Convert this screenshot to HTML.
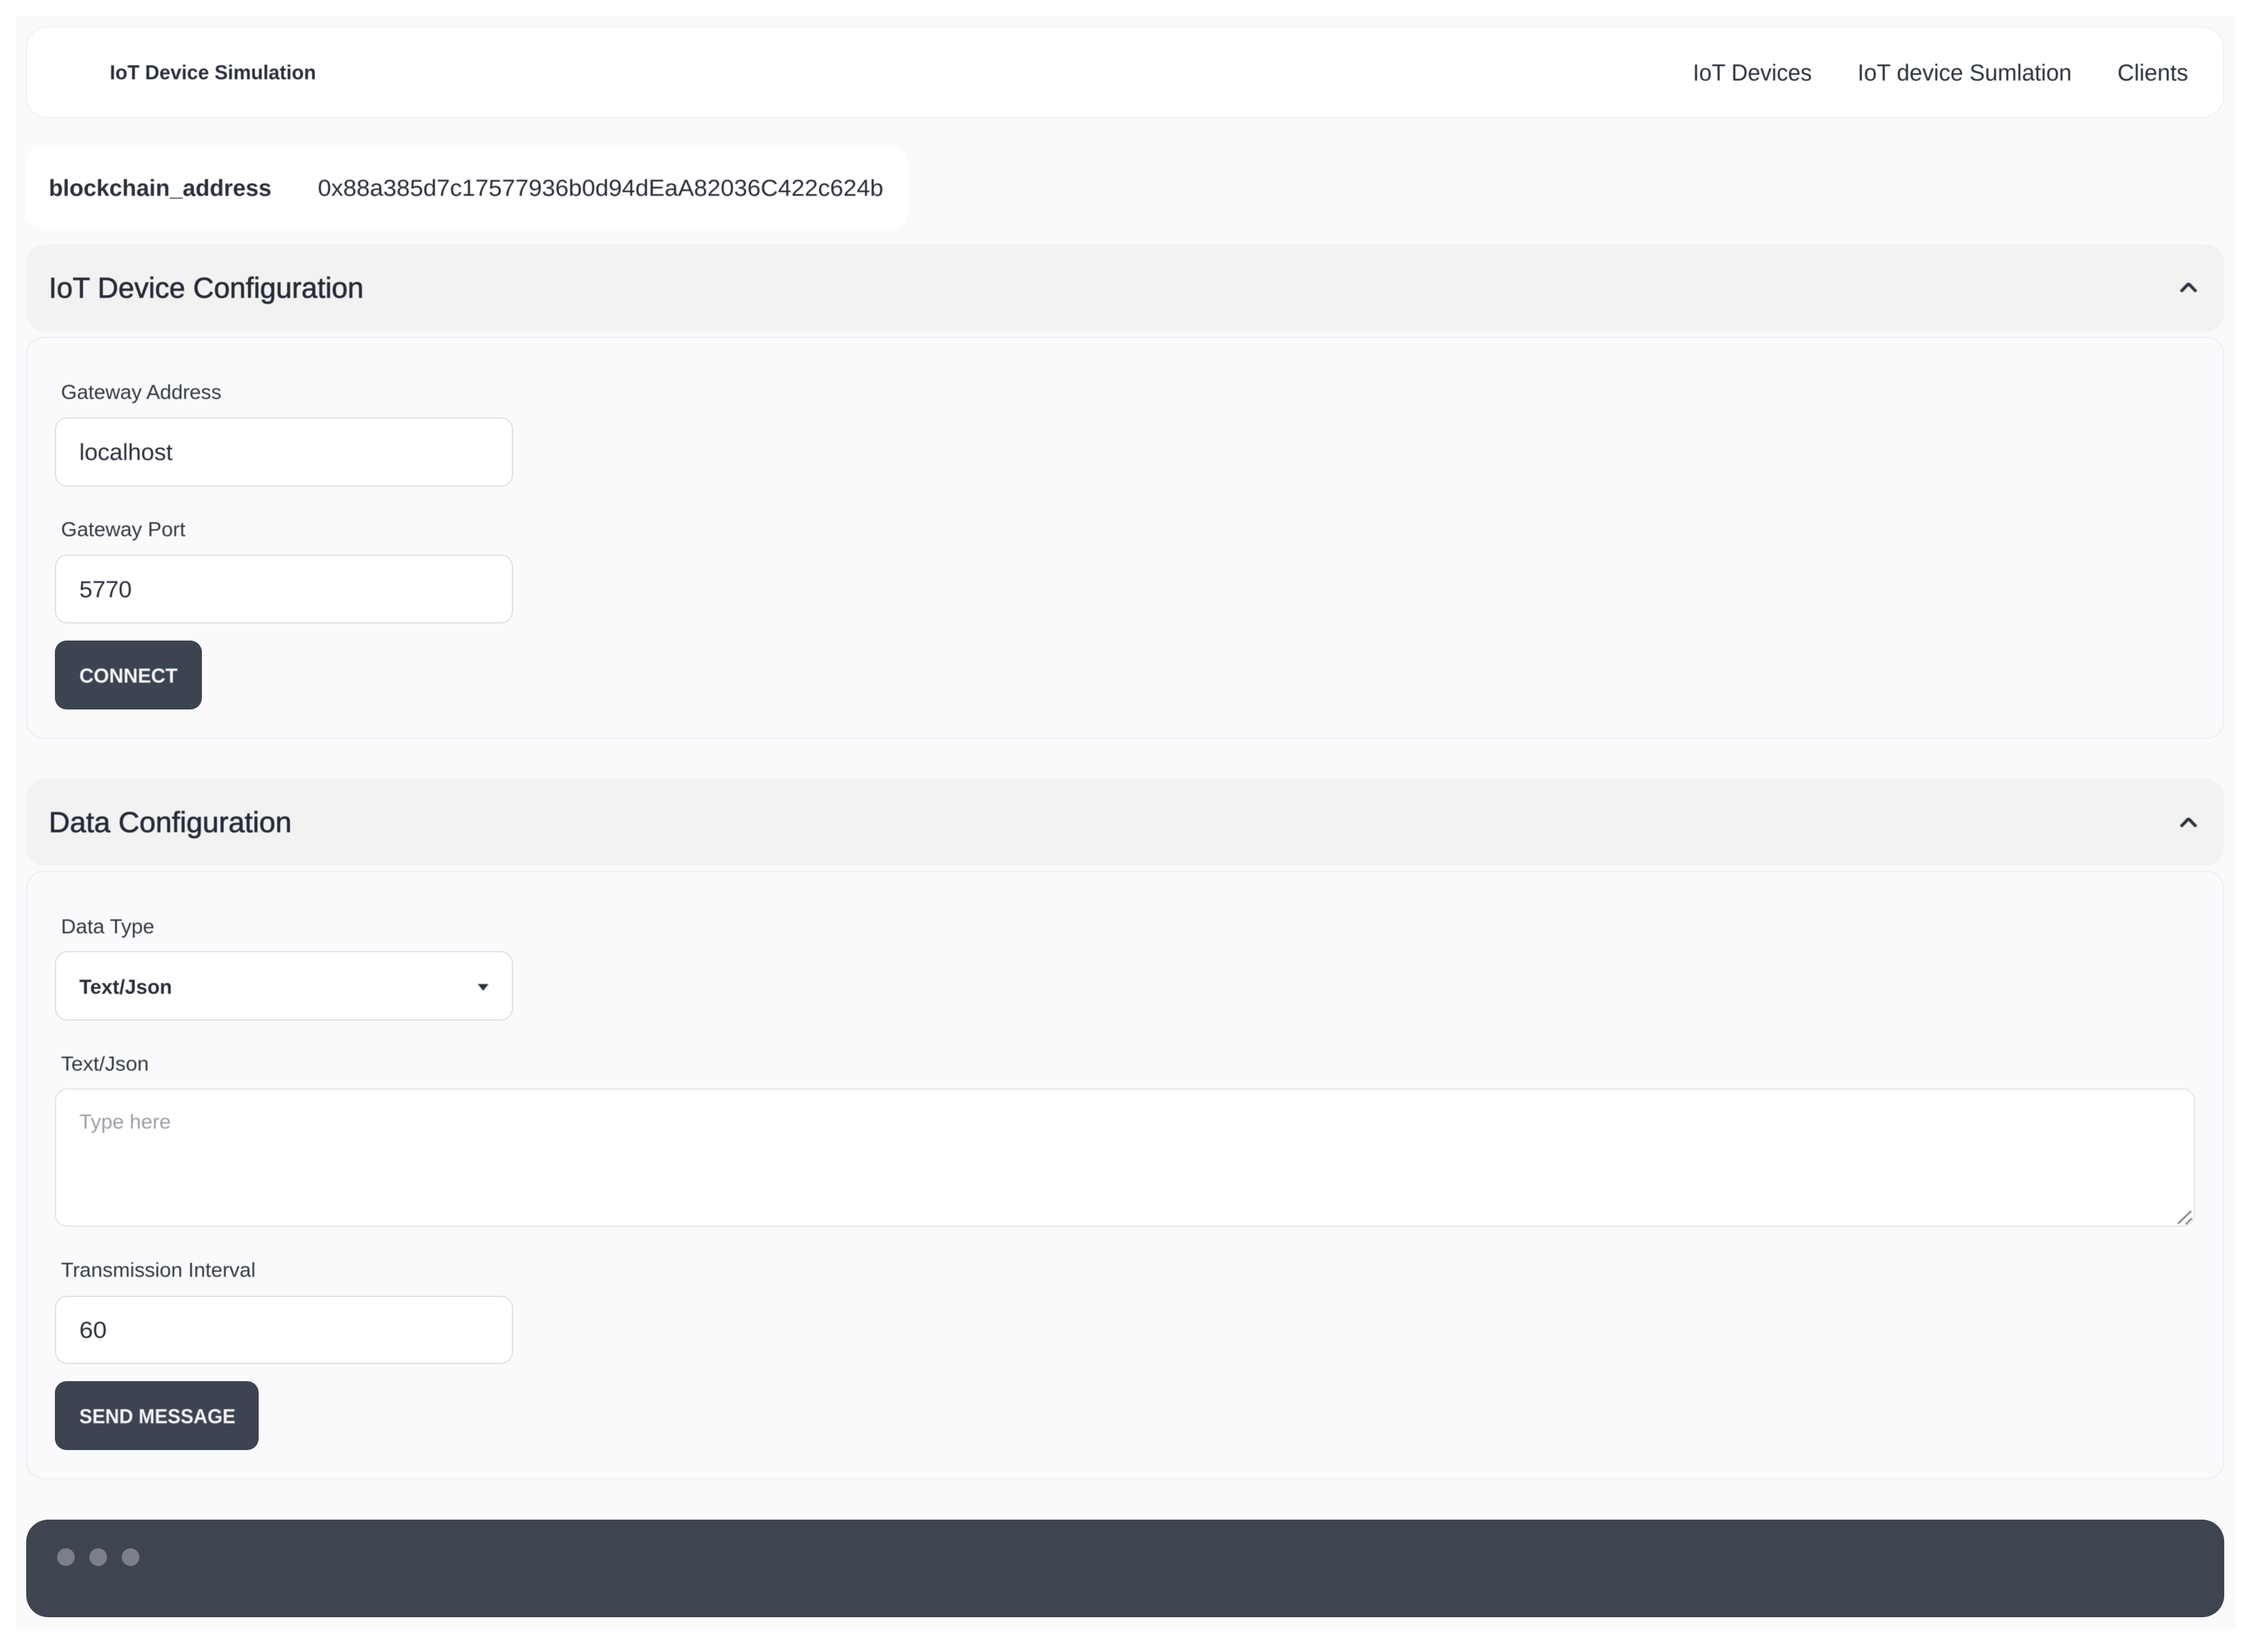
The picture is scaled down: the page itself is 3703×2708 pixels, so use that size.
<!DOCTYPE html>
<html lang="en">
<head>
<meta charset="utf-8">
<title>IoT Device Simulation</title>
<style>
html,body{margin:0;padding:0;background:#fff;width:3703px;height:2708px;overflow:hidden}
svg{display:block}
text{font-family:"Liberation Sans",Arial,sans-serif;fill:#2a303c;filter:blur(.6px)}
.b{font-weight:700}
.l{font-size:33px;fill:#333a46}
.m{font-size:38px}
.h{font-size:47px;fill:#262c38;stroke:#262c38;stroke-width:.8px}
.w{fill:#f4f5f7;font-size:33px;font-weight:700}
</style>
</head>
<body>
<svg xmlns="http://www.w3.org/2000/svg" width="3703" height="2708" viewBox="0 0 3703 2708">
<defs><filter id="s"><feGaussianBlur stdDeviation=".7"/></filter></defs>
<rect width="3703" height="2708" fill="#fff"/>
<rect x="26" y="26" width="3639" height="2644" fill="#fafafc"/>

<!-- navbar -->
<rect x="43" y="44" width="3602" height="149" rx="36" fill="#fff" stroke="#f1f2f5" stroke-width="2"/>
<text class="b" x="180" y="130" font-size="33" textLength="338" lengthAdjust="spacingAndGlyphs">IoT Device Simulation</text>
<text class="m" x="2775" y="132" textLength="195" lengthAdjust="spacingAndGlyphs">IoT Devices</text>
<text class="m" x="3045" y="132" textLength="351" lengthAdjust="spacingAndGlyphs">IoT device Sumlation</text>
<text class="m" x="3471" y="132" textLength="116" lengthAdjust="spacingAndGlyphs">Clients</text>

<!-- address -->
<rect x="43" y="241" width="1445" height="133" rx="24" fill="#fff"/>
<text class="m b" x="80" y="321" textLength="365" lengthAdjust="spacingAndGlyphs">blockchain_address</text>
<text class="m" x="521" y="321" textLength="927" lengthAdjust="spacingAndGlyphs">0x88a385d7c17577936b0d94dEaA82036C422c624b</text>

<!-- collapse 1 -->
<rect x="43" y="401" width="3603" height="142" rx="30" fill="#f2f2f3"/>
<text class="h" x="80" y="488" textLength="516" lengthAdjust="spacingAndGlyphs">IoT Device Configuration</text>
<path d="M3575 478L3587.500 465L3600 478" fill="none" stroke="#2a303c" stroke-width="5" filter="url(#s)"/>
<rect x="44" y="553" width="3601" height="657" rx="28" fill="none" stroke="#eceef2" stroke-width="2"/>

<text class="l" x="100" y="654" textLength="263" lengthAdjust="spacingAndGlyphs">Gateway Address</text>
<rect x="91" y="685" width="749" height="112" rx="19" fill="#fff" stroke="#dfe0e4" stroke-width="2"/>
<text class="m" x="130" y="754" textLength="153" lengthAdjust="spacingAndGlyphs">localhost</text>

<text class="l" x="100" y="879" textLength="204" lengthAdjust="spacingAndGlyphs">Gateway Port</text>
<rect x="91" y="910" width="749" height="111" rx="19" fill="#fff" stroke="#dfe0e4" stroke-width="2"/>
<text class="m" x="130" y="979" textLength="86" lengthAdjust="spacingAndGlyphs">5770</text>

<rect x="90" y="1050" width="241" height="113" rx="19" fill="#3d4451"/>
<text class="w" x="130" y="1119" textLength="161" lengthAdjust="spacingAndGlyphs">CONNECT</text>

<!-- collapse 2 -->
<rect x="43" y="1277" width="3603" height="142" rx="30" fill="#f2f2f3"/>
<text class="h" x="80" y="1364" textLength="398" lengthAdjust="spacingAndGlyphs">Data Configuration</text>
<path d="M3575 1355L3587.500 1342L3600 1355" fill="none" stroke="#2a303c" stroke-width="5" filter="url(#s)"/>
<rect x="44" y="1428" width="3601" height="996" rx="28" fill="none" stroke="#eceef2" stroke-width="2"/>

<text class="l" x="100" y="1530" textLength="153" lengthAdjust="spacingAndGlyphs">Data Type</text>
<rect x="91" y="1560" width="749" height="112" rx="19" fill="#fff" stroke="#dfe0e4" stroke-width="2"/>
<text class="b" x="130" y="1629" font-size="33" textLength="152" lengthAdjust="spacingAndGlyphs">Text/Json</text>
<path d="M783 1613H801L792 1624Z" fill="#2a303c" filter="url(#s)"/>

<text class="l" x="100" y="1755" textLength="144" lengthAdjust="spacingAndGlyphs">Text/Json</text>
<rect x="91" y="1785" width="3506" height="225" rx="19" fill="#fff" stroke="#e4e5e8" stroke-width="2"/>
<text x="130" y="1850" font-size="33" style="fill:#9c9fa7" textLength="150" lengthAdjust="spacingAndGlyphs">Type here</text>
<path d="M3570 2006L3592 1985M3583 2007L3593 1997" fill="none" stroke="#777" stroke-width="2.600" filter="url(#s)"/>

<text class="l" x="100" y="2093" textLength="319" lengthAdjust="spacingAndGlyphs">Transmission Interval</text>
<rect x="91" y="2125" width="749" height="110" rx="19" fill="#fff" stroke="#dfe0e4" stroke-width="2"/>
<text class="m" x="130" y="2193" textLength="45" lengthAdjust="spacingAndGlyphs">60</text>

<rect x="90" y="2264" width="334" height="113" rx="19" fill="#3d4451"/>
<text class="w" x="130" y="2333" textLength="256" lengthAdjust="spacingAndGlyphs">SEND MESSAGE</text>

<!-- terminal -->
<rect x="43" y="2491" width="3603" height="160" rx="36" fill="#3f4451"/>
<circle cx="108" cy="2552.500" r="14.500" fill="#7b7f89"/>
<circle cx="161" cy="2552.500" r="14.500" fill="#7b7f89"/>
<circle cx="214" cy="2552.500" r="14.500" fill="#7b7f89"/>
</svg>
</body>
</html>
